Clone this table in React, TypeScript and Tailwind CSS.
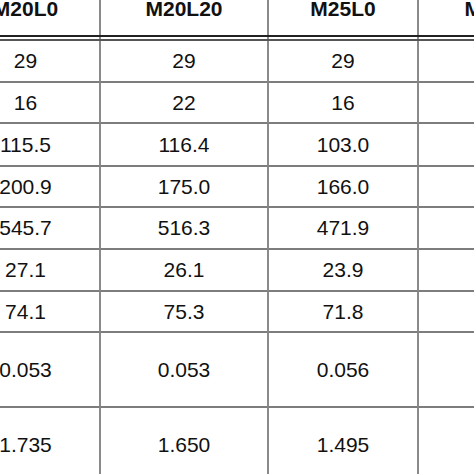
const headers = ['M20L0', 'M20L20', 'M25L0', 'M25L20'];

const rows: { h: string; cells: string[] }[] = [
  { h: 'h-[43px]', cells: ['29', '29', '29', ''] },
  { h: 'h-[41px]', cells: ['16', '22', '16', ''] },
  { h: 'h-[43px]', cells: ['115.5', '116.4', '103.0', ''] },
  { h: 'h-[41px]', cells: ['200.9', '175.0', '166.0', ''] },
  { h: 'h-[42px]', cells: ['545.7', '516.3', '471.9', ''] },
  { h: 'h-[42px]', cells: ['27.1', '26.1', '23.9', ''] },
  { h: 'h-[41px]', cells: ['74.1', '75.3', '71.8', ''] },
  { h: 'h-[75px]', cells: ['0.053', '0.053', '0.056', ''] },
  { h: 'h-[76px]', cells: ['1.735', '1.650', '1.495', ''] },
];

const widths = ['w-[149px]', 'w-[168px]', 'w-[150px]', 'w-[170px]'];

export default function App() {
  return (
    <div className="w-[474px] h-[474px] overflow-hidden bg-white text-[#111] font-['Liberation_Sans',Arial,sans-serif] text-[21px]">
      <div className="-mt-[17px] -ml-[48px] w-[637px]">
        <div className="flex h-[52px]">
          {headers.map((t, i) => (
            <div
              key={t}
              className={`${widths[i]} shrink-0 flex items-center justify-center font-bold border-r-2 border-[#8a8a8a]`}
            >
              {t}
            </div>
          ))}
        </div>
        <div className="flex h-[6px]">
          {headers.map((t, i) => (
            <div key={t} className={`${widths[i]} shrink-0 flex flex-col`}>
              <div className="h-[2px] bg-[#222]" />
              <div className="h-[2px] bg-white flex">
                <div className="flex-1" />
                <div className="w-[2px] bg-[#8a8a8a]" />
              </div>
              <div className="h-[2px] bg-[#555]" />
            </div>
          ))}
        </div>
        {rows.map((r, ri) => (
          <div key={ri} className={`flex ${ri === 0 ? 'h-[42px]' : r.h}`}>
            {r.cells.map((c, ci) => (
              <div
                key={ci}
                className={`${widths[ci]} shrink-0 flex items-center justify-center border-r-2 border-b-2 border-r-[#8a8a8a] border-b-[#7d7d7d]`}
              >
                {c}
              </div>
            ))}
          </div>
        ))}
      </div>
    </div>
  );
}
